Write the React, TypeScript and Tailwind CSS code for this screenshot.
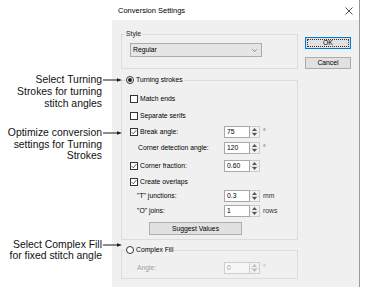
import React from "react";

type CheckProps = { checked?: boolean };

function Checkbox({ checked }: CheckProps) {
  return (
    <span className="flex h-[8px] w-[8px] shrink-0 items-center justify-center border border-[#333333] bg-white">
      {checked && (
        <svg viewBox="0 0 6 6" className="h-[6px] w-[6px]">
          <path d="M0.6 3.1 L2.3 4.8 L5.4 1.1" fill="none" stroke="#3a3a3a" strokeWidth="0.8" />
        </svg>
      )}
    </span>
  );
}

function Radio({ checked }: CheckProps) {
  return (
    <span className="flex h-[8px] w-[8px] shrink-0 items-center justify-center rounded-full border border-[#333333] bg-white">
      {checked && <span className="h-[4px] w-[4px] rounded-full bg-[#222222]" />}
    </span>
  );
}

function Spin({ disabled }: { disabled?: boolean }) {
  const fill = disabled ? "#bdbdbd" : "#555555";
  return (
    <span className="flex h-[12px] w-[10px] flex-col border border-l-0 border-[#cccccc] bg-[#f2f2f2]">
      <span className="flex flex-1 items-center justify-center border-b border-[#dadada]">
        <svg width="5" height="3" viewBox="0 0 5 3">
          <path d="M0 3 L2.5 0 L5 3 Z" fill={fill} />
        </svg>
      </span>
      <span className="flex flex-1 items-center justify-center">
        <svg width="5" height="3" viewBox="0 0 5 3">
          <path d="M0 0 L5 0 L2.5 3 Z" fill={fill} />
        </svg>
      </span>
    </span>
  );
}

function NumField({ value, unit, disabled }: { value: string; unit?: string; disabled?: boolean }) {
  return (
    <div className="flex items-center">
      <span
        className={
          disabled
            ? "flex h-[12px] w-[26px] items-center border border-[#cfcfcf] bg-[#f7f7f7] pl-[2px] text-[#a0a0a0]"
            : "flex h-[12px] w-[26px] items-center border border-[#a8a8a8] bg-white pl-[2px]"
        }
      >
        {value}
      </span>
      <Spin disabled={disabled} />
      {unit && (
        <span className={disabled ? "ml-[3px] text-[#a0a0a0]" : "ml-[3px] text-[#333333]"}>{unit}</span>
      )}
    </div>
  );
}

function Note({ lines, lead }: { lines: string[]; lead: string }) {
  return (
    <div className={`flex items-start ${lead}`}>
      <div className="flex w-[102px] shrink-0 flex-col items-end whitespace-nowrap">
        {lines.map((l) => (
          <div key={l}>{l}</div>
        ))}
      </div>
      <svg width="19" height="12" viewBox="0 0 19 12" className="relative z-10 ml-[1px] shrink-0">
        <line x1="0" y1="6" x2="15" y2="6" stroke="#1a1a1a" strokeWidth="1" />
        <path d="M14 4.3 L19 6 L14 7.7 Z" fill="#1a1a1a" />
      </svg>
    </div>
  );
}

export default function App() {
  return (
    <div className="flex h-[305px] w-[376px] items-start bg-white font-['Liberation_Sans',Arial,sans-serif] text-black">
      {/* Callouts */}
      <div className="flex w-[112px] shrink-0 flex-col text-[10.4px] text-[#111111]">
        <div className="leading-[12px]">
          <Note lead="mt-[74px]" lines={["Select Turning", "Strokes for turning", "stitch angles"]} />
        </div>
        <div className="leading-[11.5px]">
          <Note lead="mt-[17px]" lines={["Optimize conversion", "settings for Turning", "Strokes"]} />
        </div>
        <div className="leading-[11.5px]">
          <Note lead="mt-[77px]" lines={["Select Complex Fill", "for fixed stitch angle"]} />
        </div>
      </div>

      {/* Dialog */}
      <div className="flex w-[248px] shrink-0 flex-col border-r border-[#9a9a9a] text-[6.8px] leading-[8px]">
        <div className="flex h-[20px] items-center justify-between bg-white pl-[6px] pr-[6px] pt-[2px]">
          <span className="text-[7.5px]">Conversion Settings</span>
          <svg width="8" height="8" viewBox="0 0 8 8">
            <path d="M0.5 0.5 L7.5 7.5 M7.5 0.5 L0.5 7.5" stroke="#222222" strokeWidth="0.8" />
          </svg>
        </div>

        <div className="flex gap-[7px] bg-[#f0f0f0] pb-[8px] pl-[9px] pr-[8px] pt-[10px]">
          <div className="flex w-[177px] flex-col">
            <fieldset className="border border-[#dcdcdc]">
              <legend className="ml-[3px] px-[1px]">
                <span className="block h-[8px] text-[#222222]">Style</span>
              </legend>
              <div className="pb-[11px] pl-[8px] pt-[5px]">
                <div className="flex h-[14px] w-[132px] items-center justify-between border border-[#acacac] bg-[#e5e5e5] pl-[2px] pr-[4px]">
                  <span>Regular</span>
                  <svg width="5" height="3" viewBox="0 0 5 3">
                    <path d="M0.3 0.3 L2.5 2.6 L4.7 0.3" fill="none" stroke="#666666" strokeWidth="0.7" />
                  </svg>
                </div>
              </div>
            </fieldset>

            <fieldset className="mt-[6px] border border-[#dcdcdc]">
              <legend className="ml-[3px] px-[1px]">
                <span className="flex h-[10px] items-center gap-[2px]">
                  <Radio checked />
                  <span>Turning strokes</span>
                </span>
              </legend>
              <div className="flex flex-col pb-[4px] pl-[8px] pt-[8px]">
                <div className="flex h-[12px] items-center gap-[2px]">
                  <Checkbox />
                  <span>Match ends</span>
                </div>
                <div className="mt-[5px] flex h-[12px] items-center gap-[2px]">
                  <Checkbox />
                  <span>Separate serifs</span>
                </div>
                <div className="mt-[4px] flex h-[12px] items-center">
                  <div className="flex w-[94px] items-center gap-[2px]">
                    <Checkbox checked />
                    <span>Break angle:</span>
                  </div>
                  <NumField value="75" unit="°" />
                </div>
                <div className="mt-[4px] flex h-[12px] items-center">
                  <div className="w-[94px] pl-[8px]">Corner detection angle:</div>
                  <NumField value="120" unit="°" />
                </div>
                <div className="mt-[6px] flex h-[12px] items-center">
                  <div className="flex w-[94px] items-center gap-[2px]">
                    <Checkbox checked />
                    <span>Corner fraction:</span>
                  </div>
                  <NumField value="0.60" />
                </div>
                <div className="mt-[4px] flex h-[12px] items-center gap-[2px]">
                  <Checkbox checked />
                  <span>Create overlaps</span>
                </div>
                <div className="mt-[2px] flex h-[12px] items-center">
                  <div className="w-[94px] pl-[7px]">"T" junctions:</div>
                  <NumField value="0.3" unit="mm" />
                </div>
                <div className="mt-[3px] flex h-[12px] items-center">
                  <div className="w-[94px] pl-[7px]">"O" joins:</div>
                  <NumField value="1" unit="rows" />
                </div>
                <button className="ml-[19px] mt-[5px] flex h-[13px] w-[93px] items-center justify-center border border-[#adadad] bg-[#e1e1e1]">
                  Suggest Values
                </button>
              </div>
            </fieldset>

            <fieldset className="mt-[5px] border border-[#dcdcdc]">
              <legend className="ml-[3px] px-[1px]">
                <span className="flex h-[10px] items-center gap-[2px]">
                  <Radio />
                  <span>Complex Fill</span>
                </span>
              </legend>
              <div className="flex flex-col pb-[4px] pl-[8px] pt-[7px]">
                <div className="flex h-[12px] items-center">
                  <div className="w-[94px] pl-[7px] text-[#a0a0a0]">Angle:</div>
                  <NumField value="0" unit="°" disabled />
                </div>
              </div>
            </fieldset>
          </div>

          <div className="flex w-[46px] flex-col pt-[7px]">
            <button className="h-[12px] border border-[#0078d7] bg-[#e1e1e1] p-[1px]">
              <span className="flex h-full w-full items-center justify-center border border-dotted border-[#333333]">
                OK
              </span>
            </button>
            <button className="mt-[8px] flex h-[12px] items-center justify-center border border-[#adadad] bg-[#e1e1e1]">
              Cancel
            </button>
          </div>
        </div>
      </div>
    </div>
  );
}
